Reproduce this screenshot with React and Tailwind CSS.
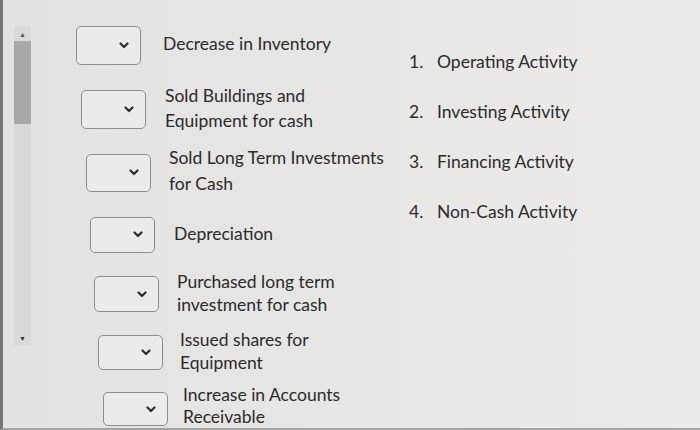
const rows = [
  { lines: ['Decrease in Inventory'], h: 'h-[64px]', ml: 'ml-[45px]', gap: 'gap-[22px]', dd: 'h-[39px]', lh: 'leading-[25px] mb-[3px]' },
  { lines: ['Sold Buildings and', 'Equipment for cash'], h: 'h-[64px]', ml: 'ml-[50px]', gap: 'gap-[19px]', dd: 'h-[39px]', lh: 'leading-[25px] mb-[2px]' },
  { lines: ['Sold Long Term Investments', 'for Cash'], h: 'h-[63px]', ml: 'ml-[55px]', gap: 'gap-[18px]', dd: 'h-[38px]', lh: 'leading-[26px] mb-[3px]' },
  { lines: ['Depreciation'], h: 'h-[61px]', ml: 'ml-[59px]', gap: 'gap-[19px]', dd: 'h-[36px]', lh: 'leading-[25px] mb-[3px]' },
  { lines: ['Purchased long term', 'investment for cash'], h: 'h-[58px]', ml: 'ml-[63px]', gap: 'gap-[18px]', dd: 'h-[36px]', lh: 'leading-[23px] mb-[3px]' },
  { lines: ['Issued shares for', 'Equipment'], h: 'h-[58px]', ml: 'ml-[67px]', gap: 'gap-[17px]', dd: 'h-[35px]', lh: 'leading-[23px] mb-[3px]' },
  { lines: ['Increase in Accounts', 'Receivable'], h: 'h-[56px]', ml: 'ml-[72px]', gap: 'gap-[15px]', dd: 'h-[34px]', lh: 'leading-[22px] mb-[6px]' },
];

const options = ['Operating Activity', 'Investing Activity', 'Financing Activity', 'Non-Cash Activity'];

const Chevron = () => (
  <svg width="10" height="7" viewBox="0 0 10 7" className="ml-[42px]">
    <polyline points="1.5,1.5 5,5 8.5,1.5" fill="none" stroke="#2e2e2e" strokeWidth="2.2" strokeLinecap="round" strokeLinejoin="round" />
  </svg>
);

export default function App() {
  return (
    <div
      className="flex h-[430px] w-[700px] overflow-hidden border-l-[3px] border-b-2 border-l-[#747474] border-b-[#a3a3a3] bg-gradient-to-r from-[#e2e2e0] to-[#ecebea] text-[17.5px] text-[#2b2b2b]"
      style={{ fontFamily: 'Lato, "Noto Sans", sans-serif' }}
    >
      {/* scrollbar */}
      <div className="ml-[11px] mt-[27px] flex h-[318px] w-[17px] flex-col bg-[#d9d9d7]">
        <div className="flex h-[14px] items-center justify-center text-[7px] leading-none text-[#555]">▲</div>
        <div className="h-[83px] bg-[#a8a8a6]" />
        <div className="flex-1" />
        <div className="flex h-[14px] items-center justify-center text-[7px] leading-none text-[#333]">▼</div>
      </div>

      {/* questions */}
      <div className="flex w-[378px] shrink-0 flex-col pt-[13px]">
        {rows.map((r, i) => (
          <div key={i} className={`flex shrink-0 items-center ${r.h} ${r.ml} ${r.gap}`}>
            <div className={`flex ${r.dd} w-[65px] shrink-0 items-center rounded-[5px] border border-[#8d8d8b] bg-[#ebebea]`}>
              <Chevron />
            </div>
            <div className={r.lh}>
              {r.lines.map((l) => (
                <div key={l} className="whitespace-nowrap">{l}</div>
              ))}
            </div>
          </div>
        ))}
      </div>

      {/* answer list */}
      <div className="flex flex-col gap-[25px] pt-[49px]">
        {options.map((o, i) => (
          <div key={o} className="flex leading-[25px]">
            <span className="w-[28px]">{i + 1}.</span>
            <span>{o}</span>
          </div>
        ))}
      </div>
    </div>
  );
}
